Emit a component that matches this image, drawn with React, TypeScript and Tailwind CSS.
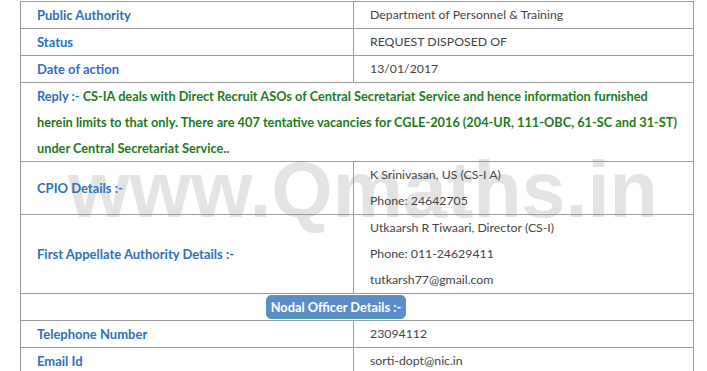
const label = "font-bold text-[#2f6fc0]";
const cell = "border border-[#9c9c9c] px-4 align-middle";

function Row({ k, v }: { k: string; v: string[] }) {
  return (
    <tr>
      <td className={`${cell} ${label} w-[333px]`}>{k}</td>
      <td className={`${cell} text-[12.3px] text-[#444]`}>
        {v.map((line) => (
          <div key={line}>{line}</div>
        ))}
      </td>
    </tr>
  );
}

export default function App() {
  return (
    <div
      className="relative h-[371px] w-[707px] overflow-hidden bg-white"
      style={{ fontFamily: "Lato, 'Open Sans', sans-serif" }}
    >
      {/* watermark sits behind the table */}
      <div
        className="absolute left-[68px] top-[150px] text-[79px] font-bold leading-none text-[#e3e3e3] whitespace-nowrap"
        style={{ fontFamily: "'Liberation Sans', Arial, sans-serif" }}
      >
        www.Qmaths.in
      </div>

      <div className="relative flex pt-px pl-[20px]">
        <table className="w-[666px] border-collapse text-[13px] leading-[26px]">
          <tbody>
            <Row k="Public Authority" v={["Department of Personnel & Training"]} />
            <Row k="Status" v={["REQUEST DISPOSED OF"]} />
            <Row k="Date of action" v={["13/01/2017"]} />
            <tr>
              <td colSpan={2} className={`${cell} text-[12.75px] font-bold whitespace-nowrap text-[#237a1e]`}>
                <div>
                  <span className="text-[#2f6fc0]">Reply :-</span> CS-IA deals with Direct Recruit ASOs of
                  Central Secretariat Service and hence information furnished
                </div>
                <div>
                  herein limits to that only. There are 407 tentative vacancies for CGLE-2016 (204-UR,
                  111-OBC, 61-SC and 31-ST)
                </div>
                <div>under Central Secretariat Service..</div>
              </td>
            </tr>
            <Row k="CPIO Details :-" v={["K Srinivasan, US (CS-I A)", "Phone: 24642705"]} />
            <Row
              k="First Appellate Authority Details :-"
              v={["Utkaarsh R Tiwaari, Director (CS-I)", "Phone: 011-24629411", "tutkarsh77@gmail.com"]}
            />
            <tr>
              <td colSpan={2} className={`${cell} text-center`}>
                <span className="mr-[42px] inline-block rounded-[5px] border border-[#4fa3a8] bg-[#5b8dc9] px-[4px] text-[12.8px] font-bold leading-[22px] text-white">
                  Nodal Officer Details :-
                </span>
              </td>
            </tr>
            <Row k="Telephone Number" v={["23094112"]} />
            <Row k="Email Id" v={["sorti-dopt@nic.in"]} />
          </tbody>
        </table>
        <div className="ml-[19px] h-[371px] w-px bg-[#9c9c9c]" />
      </div>
    </div>
  );
}
